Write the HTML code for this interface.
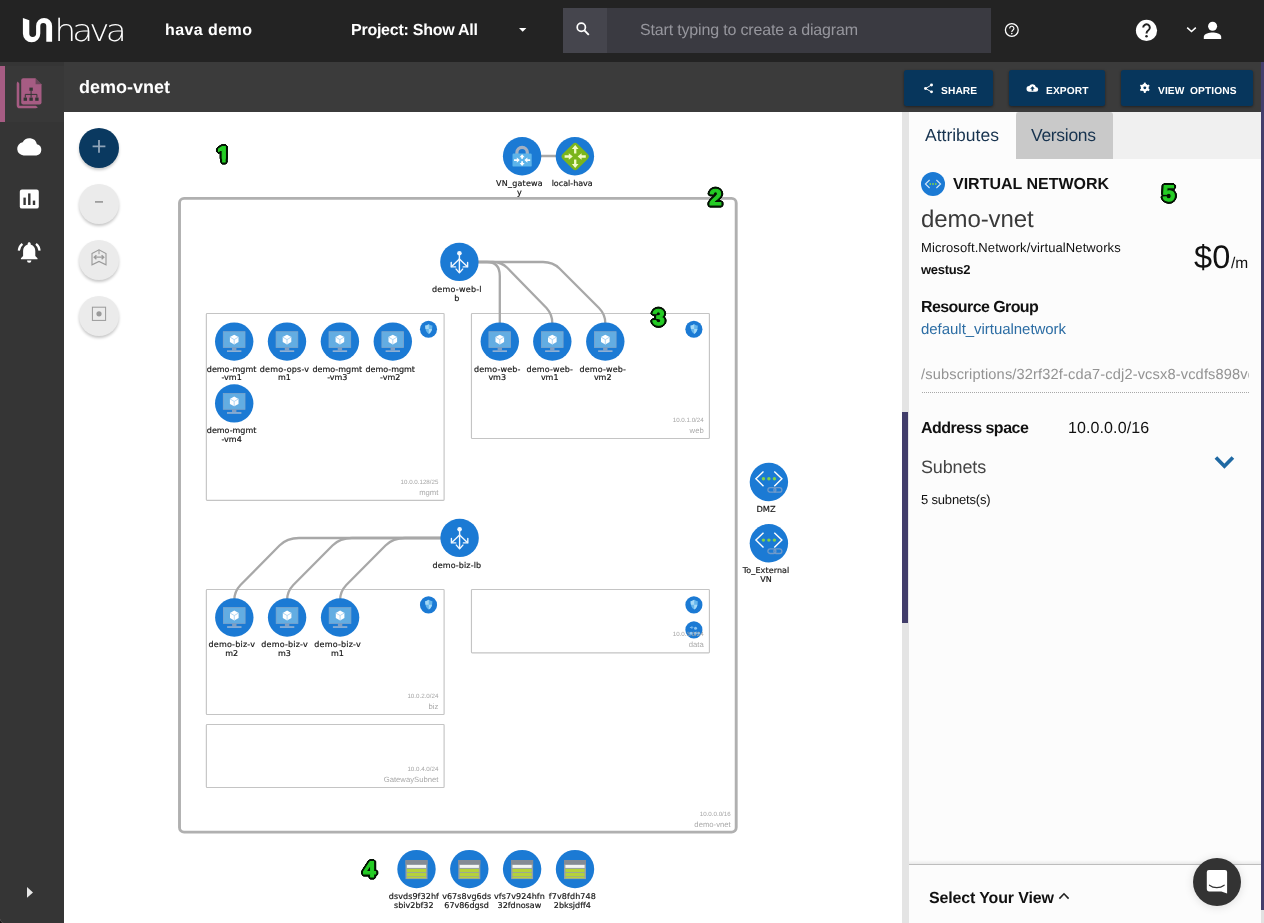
<!DOCTYPE html>
<html lang="en">
<head>
<meta charset="utf-8">
<title>hava demo - demo-vnet</title>
<style>
*{box-sizing:border-box}
html,body{margin:0;padding:0}
body{width:1264px;height:923px;overflow:hidden;position:relative;background:#fff;font-family:"Liberation Sans",sans-serif;color:#111}
.t{position:absolute;white-space:nowrap;line-height:0;will-change:transform;text-rendering:geometricPrecision}
.t i{display:inline-block;width:0;height:40px}
svg text{text-rendering:geometricPrecision}
#app{position:absolute;left:0;top:0;width:1264px;height:923px;overflow:hidden}
#hdr{position:absolute;left:0;top:0;width:1264px;height:62px;background:#232323}
#side{position:absolute;left:0;top:62px;width:64px;height:861px;background:#353535}
#tbar{position:absolute;left:64px;top:62px;width:1197px;height:50px;background:#3b3b3b}
#strip{position:absolute;left:1261px;top:62px;width:3px;height:861px;background:#e2e2e2}
#strip div{position:absolute;left:0;top:0;width:3px;height:848px;background:#443e6c}
#canvas{position:absolute;left:64px;top:112px;width:838px;height:811px;background:#fff;overflow:hidden}
#panel{position:absolute;left:902px;top:112px;width:359px;height:811px;background:#fcfcfc;overflow:hidden}
.btn{position:absolute;top:70px;height:36px;background:#07365c;border-radius:2.5px;box-shadow:0 1px 3px rgba(0,0,0,0.45)}
.fab{position:absolute;left:79px;width:40px;height:40px;border-radius:50%;background:#ebebeb;box-shadow:0 2px 3px rgba(0,0,0,0.22)}
.fab svg{position:absolute;left:0;top:0}
#dia,#diat{position:absolute;left:0;top:0}
.gl{will-change:transform}
.cidr{font-family:"Liberation Sans",sans-serif;font-size:6.2px;fill:#a6a6a6;stroke:none}
.sname{font-family:"Liberation Sans",sans-serif;font-size:7.7px;fill:#a9a9a9;stroke:none}
.anno{font-family:"Liberation Sans",sans-serif;font-weight:700;font-size:22.5px;fill:#25cd25;stroke:#25cd25;stroke-width:1.1px;stroke-linejoin:round}
</style>
</head>
<body>
<div id="hdr">
<svg class="gl" style="position:absolute;left:0;top:0" width="140" height="62" viewBox="0 0 140 62">
<path d="M22.9,18 L29.3,20.2 V33.5 A3.4,3.4 0 0 0 36.1,33.5 V26 A8,8 0 0 1 52.1,26 V41.7 H46.3 V26 A3,3 0 0 0 40.3,26 V33.5 A8.7,8.7 0 0 1 22.9,33.5 Z" fill="#fff"/>
<text transform="translate(54.6 41.3) scale(1.12 1)" font-family="'DejaVu Sans Light','DejaVu Sans',sans-serif" font-weight="200" font-size="30.5" letter-spacing="-3.5" fill="#fff">hava</text>
</svg>
<div class="t" style="top:-5px;font-size:16px;font-weight:700;color:#fff;left:165px;letter-spacing:0.42px;"><i></i>hava demo</div>
<div class="t" style="top:-5px;font-size:16px;font-weight:700;color:#fff;left:351px;letter-spacing:-0.25px;"><i></i>Project: Show All</div>
<svg style="position:absolute;left:518px;top:27px" width="10" height="6" viewBox="0 0 10 6"><path d="M1,1 H8.4 L4.7,4.8 Z" fill="#fff"/></svg>
<div style="position:absolute;left:563px;top:8px;width:44px;height:45px;background:#45454d"></div>
<div style="position:absolute;left:607px;top:8px;width:384px;height:45px;background:#3a3a41"></div>
<svg style="position:absolute;left:575px;top:21px" width="16" height="16" viewBox="0 0 16 16"><circle cx="6.3" cy="6.3" r="4.1" fill="none" stroke="#fff" stroke-width="1.7"/><path d="M9.4,9.4 L13.8,13.8" stroke="#fff" stroke-width="1.9" stroke-linecap="butt"/></svg>
<div class="t" style="top:-5px;font-size:16px;font-weight:400;color:#96969d;left:640px;letter-spacing:-0.17px;"><i></i>Start typing to create a diagram</div>
<svg style="position:absolute;left:1003px;top:21px" width="18" height="18" viewBox="0 0 18 18"><circle cx="8.8" cy="9" r="6.4" fill="none" stroke="#fff" stroke-width="1.3"/><path d="M6.7,7.4 a2.1,2.1 0 1 1 3.3,1.7 c-0.8,0.6 -1.2,1 -1.2,1.9" fill="none" stroke="#fff" stroke-width="1.2"/><circle cx="8.8" cy="12.6" r="0.8" fill="#fff"/></svg>
<svg style="position:absolute;left:1134px;top:18px" width="25" height="25" viewBox="0 0 25 25"><circle cx="12.5" cy="12.4" r="10.6" fill="#fff"/><path d="M9.2,9.6 a3.3,3.3 0 1 1 5.2,2.7 c-1.3,0.9 -1.9,1.6 -1.9,3.1" fill="none" stroke="#232323" stroke-width="2"/><circle cx="12.5" cy="18.3" r="1.25" fill="#232323"/></svg>
<svg style="position:absolute;left:1185px;top:25px" width="13" height="10" viewBox="0 0 13 10"><path d="M2.2,2.6 L6.5,6.6 L10.8,2.6" fill="none" stroke="#fff" stroke-width="1.5"/></svg>
<svg style="position:absolute;left:1202px;top:20px" width="22" height="22" viewBox="0 0 22 22"><circle cx="10.6" cy="6.2" r="4.5" fill="#fff"/><path d="M1.8,19 V16.8 C1.8,13.6 7.6,12.4 10.6,12.4 C13.6,12.4 19.2,13.6 19.2,16.8 V19 Z" fill="#fff"/></svg>
</div>
<div id="side">
<div style="position:absolute;left:0;top:4px;width:64px;height:56px;background:#383838"></div>
<div style="position:absolute;left:0;top:4px;width:5px;height:56px;background:#a65c83"></div>
<svg style="position:absolute;left:14px;top:14px" width="32" height="36" viewBox="14 76 32 36">
<path d="M18.6,82.6 a1.4,1.4 0 0 0 -0.6,1.2 V105.2 a1.8,1.8 0 0 0 1.8,1.8 H35.6 a1.4,1.4 0 0 0 1.2,-0.6" fill="none" stroke="#a65c83" stroke-width="2.6"/>
<path d="M23.2,78.3 H35.6 L41.5,84.2 V102.6 a2,2 0 0 1 -2,2 H23.2 a2,2 0 0 1 -2,-2 V80.3 a2,2 0 0 1 2,-2 Z" fill="#a65c83"/>
<path d="M35.6,78.3 V84.2 H41.5 Z" fill="#353535" fill-opacity="0.55"/>
<g fill="#353535">
<rect x="29.4" y="87.6" width="3.4" height="3.2"/>
<rect x="23.6" y="97.6" width="3.4" height="3.2"/>
<rect x="29.4" y="97.6" width="3.4" height="3.2"/>
<rect x="35.2" y="97.6" width="3.4" height="3.2"/>
</g>
<path d="M31.1,90.8 V97.6 M25.3,97.6 V94.4 H36.9 V97.6" fill="none" stroke="#353535" stroke-width="1"/>
</svg>
<svg style="position:absolute;left:14px;top:72px" width="32" height="24" viewBox="14 134 32 24">
<path d="M23.6,155.4 a6.6,6.6 0 0 1 -0.9,-13.1 a7.6,7.6 0 0 1 14.2,1.9 a5.7,5.7 0 0 1 -0.5,11.2 Z" fill="#fff"/>
</svg>
<svg style="position:absolute;left:16px;top:124px" width="26" height="26" viewBox="16 186 26 26">
<rect x="19.8" y="189.6" width="19" height="19" rx="2.2" fill="#fff"/>
<g fill="#353535"><rect x="23.4" y="197.6" width="2.4" height="7.4"/><rect x="28.1" y="193.4" width="2.4" height="11.6"/><rect x="32.8" y="200.6" width="2.4" height="4.4"/></g>
</svg>
<svg style="position:absolute;left:14px;top:176px" width="30" height="30" viewBox="14 238 30 30">
<path d="M29.2,242.2 c-0.9,0 -1.5,0.7 -1.5,1.5 v0.7 c-3,0.8 -4.6,3.4 -4.6,6.6 v5 l-2.2,2.2 v1.1 h16.6 v-1.1 l-2.2,-2.2 v-5 c0,-3.2 -1.6,-5.8 -4.6,-6.6 v-0.7 c0,-0.8 -0.6,-1.5 -1.5,-1.5 Z" fill="#fff"/>
<path d="M27,260.6 a2.2,2.2 0 0 0 4.4,0 Z" fill="#fff"/>
<path d="M22.4,243.8 a9.4,9.4 0 0 0 -3.6,6.8 M36,243.8 a9.4,9.4 0 0 1 3.6,6.8" fill="none" stroke="#fff" stroke-width="2.2"/>
</svg>
<svg style="position:absolute;left:24px;top:824px" width="12" height="14" viewBox="24 886 12 14"><path d="M27,887 L33,892.4 L27,897.8 Z" fill="#e8e8e8"/></svg>
<svg style="position:absolute;left:0;top:855px" width="6" height="6" viewBox="0 0 6 6"><path d="M0,2.6 C0.4,4.4 1.4,5.5 2.8,6 H0 Z" fill="#100d0e"/><path d="M0,2 C0.5,4.2 1.6,5.4 3.4,6" fill="none" stroke="#5e5b5c" stroke-width="0.8"/></svg>
</div>
<div id="tbar"></div>
<div class="t" style="top:53px;font-size:18px;font-weight:700;color:#fff;left:79px;"><i></i>demo-vnet</div>
<div class="btn" style="left:904px;width:89px"><svg style="position:absolute;left:18.6px;top:12.6px" width="11.3" height="11.3" viewBox="0 0 13 13"><path d="M9.6,2.4 L3,6.3 L9.6,10.2" fill="none" stroke="#fff" stroke-width="1.1"/><circle cx="9.8" cy="2.4" r="1.7" fill="#fff"/><circle cx="2.9" cy="6.3" r="1.7" fill="#fff"/><circle cx="9.8" cy="10.2" r="1.7" fill="#fff"/></svg><div class="t" style="left:36.5px;top:-16px;font-size:10.2px;font-weight:700;color:#fff;letter-spacing:0.12px;word-spacing:2.6px"><i></i>SHARE</div></div>
<div class="btn" style="left:1009px;width:96px"><svg style="position:absolute;left:16.6px;top:13.4px" width="13.6" height="10.2" viewBox="0 0 16 12"><path d="M4.2,10.4 a3.4,3.4 0 0 1 -0.4,-6.8 a4.2,4.2 0 0 1 7.8,1 a2.9,2.9 0 0 1 -0.2,5.8 Z" fill="#fff"/><path d="M7.6,3.9 L10.3,6.7 H8.6 V9 H6.6 V6.7 H4.9 Z" fill="#07365c"/></svg><div class="t" style="left:36.5px;top:-16px;font-size:10.2px;font-weight:700;color:#fff;letter-spacing:0.12px;word-spacing:2.6px"><i></i>EXPORT</div></div>
<div class="btn" style="left:1121px;width:132px"><svg style="position:absolute;left:17.6px;top:12.2px" width="11.6" height="11.6" viewBox="0 0 14 14"><circle cx="7" cy="7" r="3.5" fill="none" stroke="#fff" stroke-width="2.6"/><g stroke="#fff" stroke-width="2.3"><path d="M7,0.8 V13.2"/><path d="M1.63,3.9 L12.37,10.1"/><path d="M1.63,10.1 L12.37,3.9"/></g><circle cx="7" cy="7" r="1.7" fill="#07365c"/></svg><div class="t" style="left:36.5px;top:-16px;font-size:10.2px;font-weight:700;color:#fff;letter-spacing:0.12px;word-spacing:2.6px"><i></i>VIEW OPTIONS</div></div>
<div id="strip"><div></div></div>
<div id="canvas"><svg id="dia" width="838" height="811" viewBox="64 112 838 811">
<g font-family="'DejaVu Sans', 'Liberation Sans', sans-serif" fill="#1a1a1a">
<rect x="179.5" y="198.4" width="556.7" height="633.7" rx="4.6" fill="#fff" stroke="#b0b0b0" stroke-width="2.9"/>
<rect x="206.35" y="313.5" width="237.75" height="186.90" rx="0.8" fill="#fff" stroke="#c4c4c4" stroke-width="1.15"/>
<rect x="471.45" y="313.5" width="237.95" height="125.00" rx="0.8" fill="#fff" stroke="#c4c4c4" stroke-width="1.15"/>
<rect x="206.35" y="589.5" width="237.75" height="124.95" rx="0.8" fill="#fff" stroke="#c4c4c4" stroke-width="1.15"/>
<rect x="471.45" y="589.5" width="237.95" height="63.40" rx="0.8" fill="#fff" stroke="#c4c4c4" stroke-width="1.15"/>
<rect x="206.35" y="724.5" width="237.75" height="63.00" rx="0.8" fill="#fff" stroke="#c4c4c4" stroke-width="1.15"/>
<g fill="none" stroke="#a8a8a8" stroke-width="2.3" stroke-linecap="round">
<path d="M541,156 H556"/>
<path d="M478,262 H487 Q499.8,262 499.8,276 V323"/>
<path d="M478,262 H493 Q501.5,262 507.5,268 L546.5,308 Q552.3,314.5 552.3,323"/>
<path d="M478,262 H543 Q553,262 559.5,268.5 L599,308 Q605.3,314.5 605.3,323"/>
<path d="M441,538 H299 Q287,538 279.5,545.5 L240.5,585 Q234.3,591.5 234.3,600"/>
<path d="M441,538 H352 Q340,538 332.5,545.5 L293.3,585 Q287.1,591.5 287.1,600"/>
<path d="M441,538 H405 Q393,538 385.5,545.5 L346.3,585 Q340.1,591.5 340.1,600"/>
</g>
<g transform="translate(522.1,156.2)">
<circle r="19.2" fill="#1b7ad4"/>
<path d="M-5.2,-1.5 V-3.6 a5.2,5.2 0 0 1 10.4,0 V-1.5" fill="none" stroke="#a3b0c2" stroke-width="3.2"/>
<rect x="-9.6" y="-2.6" width="19.2" height="13" rx="1.2" fill="#5db4ea"/>
<g fill="#ffffff" transform="translate(0,3.9) scale(1.15) translate(0,-4.1)">
<path d="M0,-1 L2.2,1.6 H0.8 V3 H-0.8 V1.6 H-2.2 Z"/>
<path d="M0,9.2 L2.2,6.6 H0.8 V5.2 H-0.8 V6.6 H-2.2 Z"/>
<path d="M-2,4.1 L-4.6,1.9 V3.3 H-7 V4.9 H-4.6 V6.3 Z"/>
<path d="M2,4.1 L4.6,1.9 V3.3 H7 V4.9 H4.6 V6.3 Z"/>
</g>
</g>
<g transform="translate(574.9,156.2)">
<circle r="19.2" fill="#1b7ad4"/>
<rect x="-10.6" y="-10.6" width="21.2" height="21.2" rx="3.4" transform="translate(0.3,0.3) rotate(45)" fill="#7bb51c"/>
<g fill="#f3fbc8" transform="translate(0.3,0.3)">
<path d="M0,-11.4 L3.3,-7.4 H1.15 V-3 H-1.15 V-7.4 H-3.3 Z"/>
<path d="M0,11.4 L3.3,7.4 H1.15 V3 H-1.15 V7.4 H-3.3 Z"/>
<path d="M-2.4,0 L-6.4,-3.3 V-1.15 H-10.6 V1.15 H-6.4 V3.3 Z"/>
<path d="M2.4,0 L6.4,-3.3 V-1.15 H10.6 V1.15 H6.4 V3.3 Z"/>
</g>
</g>
<g transform="translate(459.4,261.9)">
<circle r="19.2" fill="#1b7ad4"/>
<g stroke="#f2f8fe" stroke-width="1.4" fill="none" stroke-linecap="round" stroke-linejoin="round">
<path d="M0,-8.5 V10.5"/>
<path d="M-3.3,7.2 L0,10.8 L3.3,7.2"/>
<path d="M0,-2.8 L-7.8,4.6"/>
<path d="M0,-2.8 L7.8,4.6"/>
<path d="M-8.2,0.6 V5 H-3.8"/>
<path d="M8.2,0.6 V5 H3.8"/>
</g>
<circle cx="0" cy="-8.7" r="2.3" fill="#f2f8fe"/>
</g>
<g transform="translate(234.2,341.6) scale(1.0)">
<circle r="19.2" fill="#1b7ad4"/>
<rect x="-10.9" y="-9.9" width="21.7" height="15.8" fill="#63ade2" stroke="#7ca6cd" stroke-width="0.8"/>
<path d="M0,-6.9 L4.3,-4.5 L4.3,0.5 L0,2.9 L-4.3,0.5 L-4.3,-4.5 Z" fill="#ffffff"/>
<path d="M0,-2 L4.3,-4.5 M0,-2 L-4.3,-4.5 M0,-2 L0,2.9" stroke="#9fcdf0" stroke-width="0.8" fill="none"/>
<rect x="-2.2" y="6" width="4.4" height="2.8" fill="#7f9fc4"/>
<rect x="-7.2" y="8.7" width="14.4" height="1.7" fill="#8fb0d3"/>
</g>
<g transform="translate(287.0,341.6) scale(1.0)">
<circle r="19.2" fill="#1b7ad4"/>
<rect x="-10.9" y="-9.9" width="21.7" height="15.8" fill="#63ade2" stroke="#7ca6cd" stroke-width="0.8"/>
<path d="M0,-6.9 L4.3,-4.5 L4.3,0.5 L0,2.9 L-4.3,0.5 L-4.3,-4.5 Z" fill="#ffffff"/>
<path d="M0,-2 L4.3,-4.5 M0,-2 L-4.3,-4.5 M0,-2 L0,2.9" stroke="#9fcdf0" stroke-width="0.8" fill="none"/>
<rect x="-2.2" y="6" width="4.4" height="2.8" fill="#7f9fc4"/>
<rect x="-7.2" y="8.7" width="14.4" height="1.7" fill="#8fb0d3"/>
</g>
<g transform="translate(339.9,341.6) scale(1.0)">
<circle r="19.2" fill="#1b7ad4"/>
<rect x="-10.9" y="-9.9" width="21.7" height="15.8" fill="#63ade2" stroke="#7ca6cd" stroke-width="0.8"/>
<path d="M0,-6.9 L4.3,-4.5 L4.3,0.5 L0,2.9 L-4.3,0.5 L-4.3,-4.5 Z" fill="#ffffff"/>
<path d="M0,-2 L4.3,-4.5 M0,-2 L-4.3,-4.5 M0,-2 L0,2.9" stroke="#9fcdf0" stroke-width="0.8" fill="none"/>
<rect x="-2.2" y="6" width="4.4" height="2.8" fill="#7f9fc4"/>
<rect x="-7.2" y="8.7" width="14.4" height="1.7" fill="#8fb0d3"/>
</g>
<g transform="translate(392.8,341.6) scale(1.0)">
<circle r="19.2" fill="#1b7ad4"/>
<rect x="-10.9" y="-9.9" width="21.7" height="15.8" fill="#63ade2" stroke="#7ca6cd" stroke-width="0.8"/>
<path d="M0,-6.9 L4.3,-4.5 L4.3,0.5 L0,2.9 L-4.3,0.5 L-4.3,-4.5 Z" fill="#ffffff"/>
<path d="M0,-2 L4.3,-4.5 M0,-2 L-4.3,-4.5 M0,-2 L0,2.9" stroke="#9fcdf0" stroke-width="0.8" fill="none"/>
<rect x="-2.2" y="6" width="4.4" height="2.8" fill="#7f9fc4"/>
<rect x="-7.2" y="8.7" width="14.4" height="1.7" fill="#8fb0d3"/>
</g>
<g transform="translate(234.2,403.4) scale(1.0)">
<circle r="19.2" fill="#1b7ad4"/>
<rect x="-10.9" y="-9.9" width="21.7" height="15.8" fill="#63ade2" stroke="#7ca6cd" stroke-width="0.8"/>
<path d="M0,-6.9 L4.3,-4.5 L4.3,0.5 L0,2.9 L-4.3,0.5 L-4.3,-4.5 Z" fill="#ffffff"/>
<path d="M0,-2 L4.3,-4.5 M0,-2 L-4.3,-4.5 M0,-2 L0,2.9" stroke="#9fcdf0" stroke-width="0.8" fill="none"/>
<rect x="-2.2" y="6" width="4.4" height="2.8" fill="#7f9fc4"/>
<rect x="-7.2" y="8.7" width="14.4" height="1.7" fill="#8fb0d3"/>
</g>
<g transform="translate(499.8,341.6) scale(1.0)">
<circle r="19.2" fill="#1b7ad4"/>
<rect x="-10.9" y="-9.9" width="21.7" height="15.8" fill="#63ade2" stroke="#7ca6cd" stroke-width="0.8"/>
<path d="M0,-6.9 L4.3,-4.5 L4.3,0.5 L0,2.9 L-4.3,0.5 L-4.3,-4.5 Z" fill="#ffffff"/>
<path d="M0,-2 L4.3,-4.5 M0,-2 L-4.3,-4.5 M0,-2 L0,2.9" stroke="#9fcdf0" stroke-width="0.8" fill="none"/>
<rect x="-2.2" y="6" width="4.4" height="2.8" fill="#7f9fc4"/>
<rect x="-7.2" y="8.7" width="14.4" height="1.7" fill="#8fb0d3"/>
</g>
<g transform="translate(552.3,341.6) scale(1.0)">
<circle r="19.2" fill="#1b7ad4"/>
<rect x="-10.9" y="-9.9" width="21.7" height="15.8" fill="#63ade2" stroke="#7ca6cd" stroke-width="0.8"/>
<path d="M0,-6.9 L4.3,-4.5 L4.3,0.5 L0,2.9 L-4.3,0.5 L-4.3,-4.5 Z" fill="#ffffff"/>
<path d="M0,-2 L4.3,-4.5 M0,-2 L-4.3,-4.5 M0,-2 L0,2.9" stroke="#9fcdf0" stroke-width="0.8" fill="none"/>
<rect x="-2.2" y="6" width="4.4" height="2.8" fill="#7f9fc4"/>
<rect x="-7.2" y="8.7" width="14.4" height="1.7" fill="#8fb0d3"/>
</g>
<g transform="translate(605.3,341.6) scale(1.0)">
<circle r="19.2" fill="#1b7ad4"/>
<rect x="-10.9" y="-9.9" width="21.7" height="15.8" fill="#63ade2" stroke="#7ca6cd" stroke-width="0.8"/>
<path d="M0,-6.9 L4.3,-4.5 L4.3,0.5 L0,2.9 L-4.3,0.5 L-4.3,-4.5 Z" fill="#ffffff"/>
<path d="M0,-2 L4.3,-4.5 M0,-2 L-4.3,-4.5 M0,-2 L0,2.9" stroke="#9fcdf0" stroke-width="0.8" fill="none"/>
<rect x="-2.2" y="6" width="4.4" height="2.8" fill="#7f9fc4"/>
<rect x="-7.2" y="8.7" width="14.4" height="1.7" fill="#8fb0d3"/>
</g>
<g transform="translate(428.5,329.3)">
<circle r="8.55" fill="#1b7ad4"/>
<g transform="translate(0.3,-0.2) scale(0.86,0.94)">
<path d="M0,-5.2 C1.6,-4.2 2.8,-3.9 4.2,-3.8 C4.2,0.6 3,3.4 0,5.2 C-3,3.4 -4.2,0.6 -4.2,-3.8 C-2.8,-3.9 -1.6,-4.2 0,-5.2 Z" fill="#66b6ec"/>
<path d="M0,-5.2 C-1.6,-4.2 -2.8,-3.9 -4.2,-3.8 C-4.2,-2.4 -4.1,-1.2 -3.8,0 H0 Z" fill="#a4d8f6"/>
<path d="M0,0 H3.8 C3.3,2.3 2.1,3.9 0,5.2 Z" fill="#a4d8f6"/>
</g>
</g>
<g transform="translate(693.9,329.3)">
<circle r="8.55" fill="#1b7ad4"/>
<g transform="translate(0.3,-0.2) scale(0.86,0.94)">
<path d="M0,-5.2 C1.6,-4.2 2.8,-3.9 4.2,-3.8 C4.2,0.6 3,3.4 0,5.2 C-3,3.4 -4.2,0.6 -4.2,-3.8 C-2.8,-3.9 -1.6,-4.2 0,-5.2 Z" fill="#66b6ec"/>
<path d="M0,-5.2 C-1.6,-4.2 -2.8,-3.9 -4.2,-3.8 C-4.2,-2.4 -4.1,-1.2 -3.8,0 H0 Z" fill="#a4d8f6"/>
<path d="M0,0 H3.8 C3.3,2.3 2.1,3.9 0,5.2 Z" fill="#a4d8f6"/>
</g>
</g>
<g transform="translate(768.9,482) scale(1.0)">
<circle r="19.2" fill="#1b7ad4"/>
<path d="M-5.4,-10.6 L-13,-3.2 L-5.4,4.2 M5.4,-10.6 L13,-3.2 L5.4,4.2" fill="none" stroke="#ffffff" stroke-width="1.4" stroke-linejoin="miter"/>
<circle cx="-5.5" cy="-3.2" r="1.7" fill="#7fd24a"/>
<circle cx="0" cy="-3.2" r="1.7" fill="#7fd24a"/>
<circle cx="5.5" cy="-3.2" r="1.7" fill="#7fd24a"/>
<rect x="-1" y="5.6" width="8" height="4.6" rx="2.3" fill="none" stroke="#6f9aca" stroke-width="1.3"/>
<rect x="5" y="5.6" width="8" height="4.6" rx="2.3" fill="none" stroke="#6f9aca" stroke-width="1.3"/>
</g>
<g transform="translate(768.9,543.3) scale(1.0)">
<circle r="19.2" fill="#1b7ad4"/>
<path d="M-5.4,-10.6 L-13,-3.2 L-5.4,4.2 M5.4,-10.6 L13,-3.2 L5.4,4.2" fill="none" stroke="#ffffff" stroke-width="1.4" stroke-linejoin="miter"/>
<circle cx="-5.5" cy="-3.2" r="1.7" fill="#7fd24a"/>
<circle cx="0" cy="-3.2" r="1.7" fill="#7fd24a"/>
<circle cx="5.5" cy="-3.2" r="1.7" fill="#7fd24a"/>
<rect x="-1" y="5.6" width="8" height="4.6" rx="2.3" fill="none" stroke="#6f9aca" stroke-width="1.3"/>
<rect x="5" y="5.6" width="8" height="4.6" rx="2.3" fill="none" stroke="#6f9aca" stroke-width="1.3"/>
</g>
<g transform="translate(459.6,537.9)">
<circle r="19.2" fill="#1b7ad4"/>
<g stroke="#f2f8fe" stroke-width="1.4" fill="none" stroke-linecap="round" stroke-linejoin="round">
<path d="M0,-8.5 V10.5"/>
<path d="M-3.3,7.2 L0,10.8 L3.3,7.2"/>
<path d="M0,-2.8 L-7.8,4.6"/>
<path d="M0,-2.8 L7.8,4.6"/>
<path d="M-8.2,0.6 V5 H-3.8"/>
<path d="M8.2,0.6 V5 H3.8"/>
</g>
<circle cx="0" cy="-8.7" r="2.3" fill="#f2f8fe"/>
</g>
<g transform="translate(234.3,617.5) scale(1.0)">
<circle r="19.2" fill="#1b7ad4"/>
<rect x="-10.9" y="-9.9" width="21.7" height="15.8" fill="#63ade2" stroke="#7ca6cd" stroke-width="0.8"/>
<path d="M0,-6.9 L4.3,-4.5 L4.3,0.5 L0,2.9 L-4.3,0.5 L-4.3,-4.5 Z" fill="#ffffff"/>
<path d="M0,-2 L4.3,-4.5 M0,-2 L-4.3,-4.5 M0,-2 L0,2.9" stroke="#9fcdf0" stroke-width="0.8" fill="none"/>
<rect x="-2.2" y="6" width="4.4" height="2.8" fill="#7f9fc4"/>
<rect x="-7.2" y="8.7" width="14.4" height="1.7" fill="#8fb0d3"/>
</g>
<g transform="translate(287.1,617.5) scale(1.0)">
<circle r="19.2" fill="#1b7ad4"/>
<rect x="-10.9" y="-9.9" width="21.7" height="15.8" fill="#63ade2" stroke="#7ca6cd" stroke-width="0.8"/>
<path d="M0,-6.9 L4.3,-4.5 L4.3,0.5 L0,2.9 L-4.3,0.5 L-4.3,-4.5 Z" fill="#ffffff"/>
<path d="M0,-2 L4.3,-4.5 M0,-2 L-4.3,-4.5 M0,-2 L0,2.9" stroke="#9fcdf0" stroke-width="0.8" fill="none"/>
<rect x="-2.2" y="6" width="4.4" height="2.8" fill="#7f9fc4"/>
<rect x="-7.2" y="8.7" width="14.4" height="1.7" fill="#8fb0d3"/>
</g>
<g transform="translate(340.1,617.5) scale(1.0)">
<circle r="19.2" fill="#1b7ad4"/>
<rect x="-10.9" y="-9.9" width="21.7" height="15.8" fill="#63ade2" stroke="#7ca6cd" stroke-width="0.8"/>
<path d="M0,-6.9 L4.3,-4.5 L4.3,0.5 L0,2.9 L-4.3,0.5 L-4.3,-4.5 Z" fill="#ffffff"/>
<path d="M0,-2 L4.3,-4.5 M0,-2 L-4.3,-4.5 M0,-2 L0,2.9" stroke="#9fcdf0" stroke-width="0.8" fill="none"/>
<rect x="-2.2" y="6" width="4.4" height="2.8" fill="#7f9fc4"/>
<rect x="-7.2" y="8.7" width="14.4" height="1.7" fill="#8fb0d3"/>
</g>
<g transform="translate(428.5,604.9)">
<circle r="8.55" fill="#1b7ad4"/>
<g transform="translate(0.3,-0.2) scale(0.86,0.94)">
<path d="M0,-5.2 C1.6,-4.2 2.8,-3.9 4.2,-3.8 C4.2,0.6 3,3.4 0,5.2 C-3,3.4 -4.2,0.6 -4.2,-3.8 C-2.8,-3.9 -1.6,-4.2 0,-5.2 Z" fill="#66b6ec"/>
<path d="M0,-5.2 C-1.6,-4.2 -2.8,-3.9 -4.2,-3.8 C-4.2,-2.4 -4.1,-1.2 -3.8,0 H0 Z" fill="#a4d8f6"/>
<path d="M0,0 H3.8 C3.3,2.3 2.1,3.9 0,5.2 Z" fill="#a4d8f6"/>
</g>
</g>
<g transform="translate(693.9,604.9)">
<circle r="8.55" fill="#1b7ad4"/>
<g transform="translate(0.3,-0.2) scale(0.86,0.94)">
<path d="M0,-5.2 C1.6,-4.2 2.8,-3.9 4.2,-3.8 C4.2,0.6 3,3.4 0,5.2 C-3,3.4 -4.2,0.6 -4.2,-3.8 C-2.8,-3.9 -1.6,-4.2 0,-5.2 Z" fill="#66b6ec"/>
<path d="M0,-5.2 C-1.6,-4.2 -2.8,-3.9 -4.2,-3.8 C-4.2,-2.4 -4.1,-1.2 -3.8,0 H0 Z" fill="#a4d8f6"/>
<path d="M0,0 H3.8 C3.3,2.3 2.1,3.9 0,5.2 Z" fill="#a4d8f6"/>
</g>
</g>
<g transform="translate(693.9,629.9)">
<circle r="8.55" fill="#1b7ad4"/>
<circle cx="1.6" cy="-1.6" r="1.5" fill="#8fc6f2"/>
<circle cx="-2.8" cy="3.4" r="1.5" fill="#8fc6f2"/>
<circle cx="1.4" cy="3.4" r="1.5" fill="#8fc6f2"/>
<circle cx="4.8" cy="3.4" r="1.3" fill="#8fc6f2"/>
<path d="M-4,-2.4 H-1.4 M-2.4,-3.8 L-1,-2.4 L-2.4,-1" stroke="#8fc6f2" stroke-width="0.8" fill="none"/>
</g>
<g transform="translate(416.5,869.1)">
<circle r="19.2" fill="#1b7ad4"/>
<rect x="-11" y="-9" width="22" height="19" fill="#96a0a8"/>
<rect x="-11" y="-9" width="22" height="4.4" fill="#858b94"/>
<rect x="-9.6" y="-4.2" width="19.2" height="3" fill="#f4f6f4"/>
<rect x="-9.6" y="-0.2" width="19.2" height="3.2" fill="#b5d23a"/>
<rect x="-9.6" y="3.8" width="19.2" height="3.2" fill="#b5d23a"/>
<rect x="-9.6" y="7.6" width="19.2" height="1.6" fill="#b5d23a"/>
</g>
<g transform="translate(469.3,869.1)">
<circle r="19.2" fill="#1b7ad4"/>
<rect x="-11" y="-9" width="22" height="19" fill="#96a0a8"/>
<rect x="-11" y="-9" width="22" height="4.4" fill="#858b94"/>
<rect x="-9.6" y="-4.2" width="19.2" height="3" fill="#f4f6f4"/>
<rect x="-9.6" y="-0.2" width="19.2" height="3.2" fill="#b5d23a"/>
<rect x="-9.6" y="3.8" width="19.2" height="3.2" fill="#b5d23a"/>
<rect x="-9.6" y="7.6" width="19.2" height="1.6" fill="#b5d23a"/>
</g>
<g transform="translate(522.1,869.1)">
<circle r="19.2" fill="#1b7ad4"/>
<rect x="-11" y="-9" width="22" height="19" fill="#96a0a8"/>
<rect x="-11" y="-9" width="22" height="4.4" fill="#858b94"/>
<rect x="-9.6" y="-4.2" width="19.2" height="3" fill="#f4f6f4"/>
<rect x="-9.6" y="-0.2" width="19.2" height="3.2" fill="#b5d23a"/>
<rect x="-9.6" y="3.8" width="19.2" height="3.2" fill="#b5d23a"/>
<rect x="-9.6" y="7.6" width="19.2" height="1.6" fill="#b5d23a"/>
</g>
<g transform="translate(575,869.1)">
<circle r="19.2" fill="#1b7ad4"/>
<rect x="-11" y="-9" width="22" height="19" fill="#96a0a8"/>
<rect x="-11" y="-9" width="22" height="4.4" fill="#858b94"/>
<rect x="-9.6" y="-4.2" width="19.2" height="3" fill="#f4f6f4"/>
<rect x="-9.6" y="-0.2" width="19.2" height="3.2" fill="#b5d23a"/>
<rect x="-9.6" y="3.8" width="19.2" height="3.2" fill="#b5d23a"/>
<rect x="-9.6" y="7.6" width="19.2" height="1.6" fill="#b5d23a"/>
</g>
</g>
</svg>
<svg id="diat" class="gl" width="838" height="811" viewBox="64 112 838 811">
<filter id="ol" x="-40%" y="-40%" width="180%" height="180%" color-interpolation-filters="sRGB">
<feOffset in="SourceAlpha" dx="1.550" dy="0.000" result="o0"/>
<feOffset in="SourceAlpha" dx="1.431" dy="0.594" result="o1"/>
<feOffset in="SourceAlpha" dx="1.096" dy="1.096" result="o2"/>
<feOffset in="SourceAlpha" dx="0.594" dy="1.431" result="o3"/>
<feOffset in="SourceAlpha" dx="0.000" dy="1.550" result="o4"/>
<feOffset in="SourceAlpha" dx="-0.594" dy="1.431" result="o5"/>
<feOffset in="SourceAlpha" dx="-1.096" dy="1.096" result="o6"/>
<feOffset in="SourceAlpha" dx="-1.431" dy="0.594" result="o7"/>
<feOffset in="SourceAlpha" dx="-1.550" dy="0.000" result="o8"/>
<feOffset in="SourceAlpha" dx="-1.431" dy="-0.594" result="o9"/>
<feOffset in="SourceAlpha" dx="-1.096" dy="-1.096" result="o10"/>
<feOffset in="SourceAlpha" dx="-0.594" dy="-1.431" result="o11"/>
<feOffset in="SourceAlpha" dx="-0.000" dy="-1.550" result="o12"/>
<feOffset in="SourceAlpha" dx="0.594" dy="-1.431" result="o13"/>
<feOffset in="SourceAlpha" dx="1.096" dy="-1.096" result="o14"/>
<feOffset in="SourceAlpha" dx="1.431" dy="-0.594" result="o15"/>
<feOffset in="SourceAlpha" dx="0.931" dy="0.189" result="i0"/>
<feOffset in="SourceAlpha" dx="0.525" dy="0.792" result="i1"/>
<feOffset in="SourceAlpha" dx="-0.189" dy="0.931" result="i2"/>
<feOffset in="SourceAlpha" dx="-0.792" dy="0.525" result="i3"/>
<feOffset in="SourceAlpha" dx="-0.931" dy="-0.189" result="i4"/>
<feOffset in="SourceAlpha" dx="-0.525" dy="-0.792" result="i5"/>
<feOffset in="SourceAlpha" dx="0.189" dy="-0.931" result="i6"/>
<feOffset in="SourceAlpha" dx="0.792" dy="-0.525" result="i7"/>
<feMerge result="m"><feMergeNode in="o0"/><feMergeNode in="o1"/><feMergeNode in="o2"/><feMergeNode in="o3"/><feMergeNode in="o4"/><feMergeNode in="o5"/><feMergeNode in="o6"/><feMergeNode in="o7"/><feMergeNode in="o8"/><feMergeNode in="o9"/><feMergeNode in="o10"/><feMergeNode in="o11"/><feMergeNode in="o12"/><feMergeNode in="o13"/><feMergeNode in="o14"/><feMergeNode in="o15"/><feMergeNode in="i0"/><feMergeNode in="i1"/><feMergeNode in="i2"/><feMergeNode in="i3"/><feMergeNode in="i4"/><feMergeNode in="i5"/><feMergeNode in="i6"/><feMergeNode in="i7"/></feMerge>
<feFlood flood-color="#041204" result="k"/>
<feComposite in="k" in2="m" operator="in" result="ob"/>
<feOffset in="ob" dx="0.1" dy="0.35" result="sh"/>
<feGaussianBlur in="sh" stdDeviation="0.4" result="shb"/>
<feMerge><feMergeNode in="shb"/><feMergeNode in="ob"/><feMergeNode in="SourceGraphic"/></feMerge>
</filter>
<g font-family="'DejaVu Sans', 'Liberation Sans', sans-serif" fill="#161616" stroke="#161616" stroke-width="0.18" text-rendering="geometricPrecision">
<text x="730.7" y="816.4" text-anchor="end" class="cidr">10.0.0.0/16</text>
<text x="730.7" y="826.8" text-anchor="end" class="sname">demo-vnet</text>
<text x="438.40000000000003" y="483.80" text-anchor="end" class="cidr">10.0.0.128/25</text>
<text x="438.40000000000003" y="494.60" text-anchor="end" class="sname">mgmt</text>
<text x="703.6999999999999" y="422.00" text-anchor="end" class="cidr">10.0.1.0/24</text>
<text x="703.6999999999999" y="432.80" text-anchor="end" class="sname">web</text>
<text x="438.40000000000003" y="698.00" text-anchor="end" class="cidr">10.0.2.0/24</text>
<text x="438.40000000000003" y="708.80" text-anchor="end" class="sname">biz</text>
<text x="703.6999999999999" y="636.40" text-anchor="end" class="cidr">10.0.3.0/24</text>
<text x="703.6999999999999" y="647.20" text-anchor="end" class="sname">data</text>
<text x="438.40000000000003" y="770.70" text-anchor="end" class="cidr">10.0.4.0/24</text>
<text x="438.40000000000003" y="782.40" text-anchor="end" class="sname">GatewaySubnet</text>
<text x="519.4" y="185.70" text-anchor="middle" font-size="8" textLength="46.60" lengthAdjust="spacing">VN_gatewa</text>
<text x="519.4" y="194.50" text-anchor="middle" font-size="8">y</text>
<text x="572.2" y="185.70" text-anchor="middle" font-size="8" textLength="41.10" lengthAdjust="spacing">local-hava</text>
<text x="456.8" y="292.30" text-anchor="middle" font-size="8" textLength="49.50" lengthAdjust="spacing">demo-web-l</text>
<text x="456.8" y="301.10" text-anchor="middle" font-size="8">b</text>
<text x="231.6" y="371.50" text-anchor="middle" font-size="8" textLength="49.60" lengthAdjust="spacing">demo-mgmt</text>
<text x="231.6" y="380.30" text-anchor="middle" font-size="8">-vm1</text>
<text x="284.4" y="371.50" text-anchor="middle" font-size="8" textLength="49.15" lengthAdjust="spacing">demo-ops-v</text>
<text x="284.4" y="380.30" text-anchor="middle" font-size="8">m1</text>
<text x="337.29999999999995" y="371.50" text-anchor="middle" font-size="8" textLength="49.60" lengthAdjust="spacing">demo-mgmt</text>
<text x="337.29999999999995" y="380.30" text-anchor="middle" font-size="8">-vm3</text>
<text x="390.2" y="371.50" text-anchor="middle" font-size="8" textLength="49.60" lengthAdjust="spacing">demo-mgmt</text>
<text x="390.2" y="380.30" text-anchor="middle" font-size="8">-vm2</text>
<text x="231.6" y="433.20" text-anchor="middle" font-size="8" textLength="49.60" lengthAdjust="spacing">demo-mgmt</text>
<text x="231.6" y="442.00" text-anchor="middle" font-size="8">-vm4</text>
<text x="497.2" y="371.50" text-anchor="middle" font-size="8" textLength="46.50" lengthAdjust="spacing">demo-web-</text>
<text x="497.2" y="380.30" text-anchor="middle" font-size="8">vm3</text>
<text x="549.6999999999999" y="371.50" text-anchor="middle" font-size="8" textLength="46.50" lengthAdjust="spacing">demo-web-</text>
<text x="549.6999999999999" y="380.30" text-anchor="middle" font-size="8">vm1</text>
<text x="602.6999999999999" y="371.50" text-anchor="middle" font-size="8" textLength="46.50" lengthAdjust="spacing">demo-web-</text>
<text x="602.6999999999999" y="380.30" text-anchor="middle" font-size="8">vm2</text>
<text x="766" y="511.70" text-anchor="middle" font-size="8.3">DMZ</text>
<text x="766" y="573.00" text-anchor="middle" font-size="8" textLength="46.65" lengthAdjust="spacing">To_External</text>
<text x="766" y="581.80" text-anchor="middle" font-size="8">VN</text>
<text x="456.8" y="567.50" text-anchor="middle" font-size="8" textLength="48.65" lengthAdjust="spacing">demo-biz-lb</text>
<text x="231.70000000000002" y="646.90" text-anchor="middle" font-size="8" textLength="46.40" lengthAdjust="spacing">demo-biz-v</text>
<text x="231.70000000000002" y="655.70" text-anchor="middle" font-size="8">m2</text>
<text x="284.5" y="646.90" text-anchor="middle" font-size="8" textLength="46.40" lengthAdjust="spacing">demo-biz-v</text>
<text x="284.5" y="655.70" text-anchor="middle" font-size="8">m3</text>
<text x="337.5" y="646.90" text-anchor="middle" font-size="8" textLength="46.40" lengthAdjust="spacing">demo-biz-v</text>
<text x="337.5" y="655.70" text-anchor="middle" font-size="8">m1</text>
<text x="413.8" y="899.00" text-anchor="middle" font-size="8" textLength="50.15" lengthAdjust="spacing">dsvds9f32hf</text>
<text x="413.8" y="908.00" text-anchor="middle" font-size="8">sbiv2bf32</text>
<text x="466.6" y="899.00" text-anchor="middle" font-size="8" textLength="48.90" lengthAdjust="spacing">v67s8vg6ds</text>
<text x="466.6" y="908.00" text-anchor="middle" font-size="8">67v86dgsd</text>
<text x="519.4" y="899.00" text-anchor="middle" font-size="8" textLength="50.90" lengthAdjust="spacing">vfs7v924hfn</text>
<text x="519.4" y="908.00" text-anchor="middle" font-size="8">32fdnosaw</text>
<text x="572.3" y="899.00" text-anchor="middle" font-size="8" textLength="47.15" lengthAdjust="spacing">f7v8fdh748</text>
<text x="572.3" y="908.00" text-anchor="middle" font-size="8">2bksjdff4</text>
</g>
<clipPath id="c1" clipPathUnits="userSpaceOnUse"><polygon points="214.1,132.2 237.1,132.2 237.1,158.80 225.62,158.80 225.62,164.2 222.12,164.2 222.12,158.80 214.1,158.80"/></clipPath>
<g filter="url(#ol)"><text x="217.1" y="162.2" class="anno" clip-path="url(#c1)">1</text></g>
<g filter="url(#ol)"><text x="709.2" y="205.4" class="anno">2</text></g>
<g filter="url(#ol)"><text x="652.3" y="325.0" class="anno">3</text></g>
<g filter="url(#ol)"><text x="363.2" y="876.9" class="anno">4</text></g>
</svg></div>
<div class="fab" style="top:128px;background:#0a3960"><svg width="40" height="40" viewBox="0 0 40 40"><path d="M13.6,18.4 H26.4 M20,12 V24.8" stroke="#8fa4b8" stroke-width="1.8" fill="none"/></svg></div>
<div class="fab" style="top:184px"><svg width="40" height="40" viewBox="0 0 40 40"><path d="M16,17.9 H24" stroke="#9a9a9a" stroke-width="1.7" fill="none"/></svg></div>
<div class="fab" style="top:240px"><svg width="40" height="40" viewBox="0 1.8 40 40"><path d="M13,15.4 L20,11.6 L27,15.4 V26.6 L20,23.2 L13,26.6 Z" fill="none" stroke="#9a9a9a" stroke-width="1.1"/><path d="M20,11.6 V16" stroke="#9a9a9a" stroke-width="1"/><path d="M15.4,19 H24.6 M17.4,17 L15.2,19 L17.4,21 M22.6,17 L24.8,19 L22.6,21" fill="none" stroke="#9a9a9a" stroke-width="1.3"/></svg></div>
<div class="fab" style="top:296px"><svg width="40" height="40" viewBox="0 1.2 40 40"><rect x="13.4" y="12.4" width="13.2" height="13.2" fill="none" stroke="#9a9a9a" stroke-width="1"/><circle cx="20" cy="19" r="2.6" fill="#9a9a9a"/></svg></div>
<div id="panel">
<div style="position:absolute;left:0;top:0;width:7px;height:811px;background:#e4e4e4"></div>
<div style="position:absolute;left:0;top:300px;width:6px;height:210.5px;background:#413d6a"></div>
<div style="position:absolute;left:7px;top:0;width:352px;height:47px;background:#f0f0f0"></div>
<div style="position:absolute;left:7px;top:0;width:107px;height:47px;background:#fcfcfc"></div>
<div style="position:absolute;left:114px;top:0;width:97px;height:47px;background:#c9c9c9;border-radius:3px 3px 0 0"></div>
<div style="position:absolute;left:7px;top:748px;width:352px;height:4px;background:linear-gradient(to bottom,rgba(0,0,0,0),rgba(0,0,0,0.07))"></div><div style="position:absolute;left:7px;top:752px;width:352px;height:59px;background:#fcfcfc;border-top:1px solid #bdbdbd"></div>
</div>
<div class="t" style="top:101px;font-size:17.5px;font-weight:400;color:#17334f;left:925px;"><i></i>Attributes</div>
<div class="t" style="top:101px;font-size:17.5px;font-weight:400;color:#17334f;left:1031.3px;letter-spacing:-0.3px;"><i></i>Versions</div>
<svg style="position:absolute;left:921px;top:172px" width="24" height="24" viewBox="0 0 24 24"><circle cx="12" cy="12" r="12" fill="#1b7ad4"/><path d="M8.6,8 L4.4,12 L8.6,16 M15.4,8 L19.6,12 L15.4,16" fill="none" stroke="#cfe6fa" stroke-width="1.1"/><circle cx="9.2" cy="12" r="0.9" fill="#7fd24a"/><circle cx="12" cy="12" r="0.9" fill="#7fd24a"/><circle cx="14.8" cy="12" r="0.9" fill="#7fd24a"/></svg>
<div class="t" style="top:149px;font-size:16px;font-weight:700;color:#111;left:953px;"><i></i>VIRTUAL NETWORK</div>
<div class="t" style="top:187px;font-size:24px;font-weight:400;color:#3a3a3a;left:920.6px;letter-spacing:-0.1px;"><i></i>demo-vnet</div>
<div class="t" style="top:212px;font-size:13px;font-weight:400;color:#111;left:920.8px;letter-spacing:0.1px;"><i></i>Microsoft.Network/virtualNetworks</div>
<div class="t" style="top:234px;font-size:13px;font-weight:700;color:#111;left:920.8px;letter-spacing:-0.3px;"><i></i>westus2</div>
<div class="t" style="top:228px;font-size:32.5px;font-weight:400;color:#111;left:1193.6px;letter-spacing:0.3px;"><i></i>$0</div>
<div class="t" style="top:228px;font-size:15.5px;font-weight:400;color:#111;left:1231px;"><i></i>/m</div>
<div class="t" style="top:272px;font-size:16px;font-weight:700;color:#111;left:920.8px;letter-spacing:-0.58px;"><i></i>Resource Group</div>
<div class="t" style="top:294px;font-size:15px;font-weight:400;color:#2c6da4;left:920.8px;letter-spacing:-0.04px;"><i></i>default_virtualnetwork</div>
<div class="t" style="left:921px;top:339px;width:328px;height:50px;overflow:hidden;font-size:14.6px;letter-spacing:0.15px;color:#939393"><i></i>/subscriptions/32rf32f-cda7-cdj2-vcsx8-vcdfs898vd</div>
<div style="position:absolute;left:921.5px;top:392px;width:327.5px;height:0;border-top:1px dotted #a8a8a8"></div>
<div class="t" style="top:393px;font-size:16px;font-weight:700;color:#111;left:920.8px;letter-spacing:-0.5px;"><i></i>Address space</div>
<div class="t" style="top:393px;font-size:16px;font-weight:400;color:#111;left:1067.8px;letter-spacing:0.1px;"><i></i>10.0.0.0/16</div>
<div class="t" style="top:433px;font-size:18px;font-weight:400;color:#444;left:920.7px;letter-spacing:-0.15px;"><i></i>Subnets</div>
<svg style="position:absolute;left:1212px;top:453px" width="26" height="20" viewBox="0 0 26 20"><path d="M3.9,4.5 L12.4,13.2 L20.9,4.5" fill="none" stroke="#1f69a3" stroke-width="3.7" stroke-linejoin="miter"/></svg>
<div class="t" style="top:464px;font-size:13px;font-weight:400;color:#111;left:920.8px;letter-spacing:-0.18px;"><i></i>5 subnets(s)</div>
<div class="t" style="top:863px;font-size:16px;font-weight:700;color:#111;left:929px;letter-spacing:-0.15px;"><i></i>Select Your View</div>
<svg style="position:absolute;left:1057px;top:890px" width="14" height="12" viewBox="0 0 14 12"><path d="M2.4,8.6 L7,3.8 L11.6,8.6" fill="none" stroke="#222" stroke-width="1.6"/></svg>
<div style="position:absolute;left:1193px;top:858px;width:48px;height:48px;border-radius:50%;background:#333;box-shadow:0 1px 10px rgba(0,0,0,0.13)"></div>
<svg style="position:absolute;left:1193px;top:858px" width="48" height="48" viewBox="0 0 48 48"><path d="M15.9,11.9 H32 a2.1,2.1 0 0 1 2.1,2.1 V35.6 L28.4,33.4 H15.9 a2.1,2.1 0 0 1 -2.1,-2.1 V14 a2.1,2.1 0 0 1 2.1,-2.1 Z" fill="#fff"/><path d="M16.4,27.2 C20.6,30.4 27,30.4 31.2,27.2" fill="none" stroke="#333" stroke-width="1.1" stroke-linecap="round"/></svg>
<svg class="gl" style="position:absolute;left:1150px;top:175px" width="40" height="40" viewBox="1150 175 40 40"><g filter="url(#ol)"><text x="1162.4" y="201.3" class="anno">5</text></g></svg>
</body>
</html>
